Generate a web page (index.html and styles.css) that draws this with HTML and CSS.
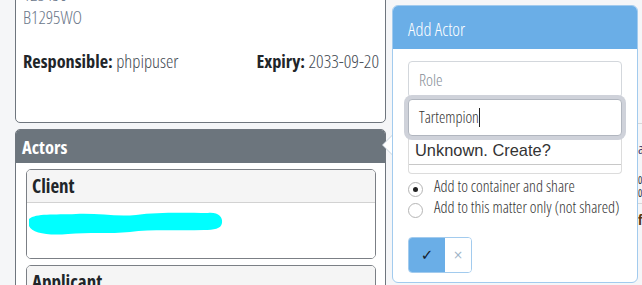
FILE: index.html
```html
<!DOCTYPE html>
<html>
<head>
<meta charset="utf-8">
<link rel="stylesheet" href="styles.css">
</head>
<body>
<div class="page">
  <main class="left">
    <section class="card info">
      <div class="ref-line cut">123456</div>
      <div class="ref-line">B1295WO</div>
      <div class="meta-row">
        <span><b class="lbl">Responsible:</b> <span class="val">phpipuser</span></span>
        <span><b class="lbl">Expiry:</b> <span class="val">2033-09-20</span></span>
      </div>
    </section>
    <section class="card actors">
      <header class="actors-head">Actors</header>
      <div class="actors-body">
        <div class="role-card">
          <div class="role-head">Client</div>
          <div class="role-body">
            <svg class="scribble" width="196" height="26" viewBox="0 0 196 26"><path d="M1,9 C8,3 26,5 48,4 C70,3 88,7 108,5 C130,2 158,3 180,3 C190,2 195,7 194,13 C193,19 186,20 176,20 C150,21 124,19 102,22 C82,24 60,22 40,24 C20,26 4,23 1,16 Z" fill="#00ffff"/></svg>
          </div>
        </div>
        <div class="role-card">
          <div class="role-head">Applicant</div>
          <div class="role-body"></div>
        </div>
      </div>
    </section>
  </main>
  <aside class="right">
    <div class="bg-table">
      <div class="bg-row first">ab</div>
      <div class="bg-row pair">0<br>0</div>
      <div class="bg-row rule strong">f</div>
    </div>
  </aside>
</div>

<div class="popover">
  <span class="arrow"></span>
  <div class="pop-head">Add Actor</div>
  <div class="pop-body">
    <input class="form-control" type="text" placeholder="Role">
    <div class="form-control focused">Tartempion<span class="caret"></span></div>
    <ul class="menu">
      <li class="menu-item">Unknown. Create?</li>
    </ul>
    <div class="radios">
      <label class="radio"><span class="circle checked"></span><span>Add to container and share</span></label>
      <label class="radio"><span class="circle"></span><span>Add to this matter only (not shared)</span></label>
    </div>
    <div class="btn-group">
      <span class="btn ok">✓</span><span class="btn cancel">×</span>
    </div>
  </div>
</div>
</body>
</html>
```
FILE: styles.css
```css
:root {
  --cond: "Open Sans", "DejaVu Sans Condensed", sans-serif;
}
* { box-sizing: border-box; }
html, body { margin: 0; padding: 0; }
body {
  background: #f5f6f8;
  font-family: var(--cond);
  font-stretch: 75%;
  font-weight: 300;
  color: #212529;
  overflow: hidden;
  width: 642px;
  height: 285px;
}
.page {
  display: flex;
  padding-left: 15px;
  margin-top: -22px;
  gap: 6px;
}
.left { width: 371px; flex: none; }
.card {
  background: #fff;
  border: 1px solid #6f767e;
  border-radius: 5px;
}
.info { padding: 5px 6px 50px 7px; }
.ref-line {
  font-size: 18px;
  line-height: 24px;
  color: #6b778a;
}
.ref-line.cut { line-height: 21px; }
.meta-row {
  display: flex;
  justify-content: space-between;
  margin-top: 21px;
  line-height: 22px;
  font-size: 18.6px;
}
.lbl { font-weight: 700; color: #212529; font-size: 18.3px; }
.val { color: #444a52; }
.actors { margin-top: 6px; overflow: hidden; }
.actors-head {
  background: #6c757d;
  color: #fff;
  font-weight: 700;
  font-size: 18.5px;
  height: 33px;
  line-height: 33px;
  padding-left: 6px;
}
.actors-body { padding: 6px 9px 0 10px; }
.role-card {
  border: 1px solid #7b7f85;
  border-radius: 5px;
  overflow: hidden;
  margin-bottom: 6px;
}
.role-head {
  background: #f5f5f5;
  border-bottom: 1px solid #d2d2d2;
  height: 33px;
  line-height: 33px;
  padding-left: 5px;
  font-weight: 700;
  font-size: 19px;
}
.role-body { height: 55px; background: #fff; padding: 7px 0 0 1px; }
.scribble { display: block; }

.right { width: 260px; flex: none; }
.bg-table {
  margin-top: 145px;
  border-top: 1px solid #d8d8d8;
  padding-left: 246px;
  font-size: 15px;
  font-weight: 400;
  color: #333;
}
.bg-row { line-height: 14px; }
.bg-row.first { padding-top: 17px; color: #4a3b6b; margin-bottom: 19px; }
.bg-row.pair { font-size: 10px; line-height: 13px; }
.bg-row.rule { border-top: 1px solid #d8d8d8; margin-top: 3px; padding-top: 8px; }
.bg-row.strong { font-weight: 700; color: #5a3a10; }

.popover {
  position: absolute;
  left: 392px;
  top: 5px;
  width: 246px;
  height: 278px;
  background: #fff;
  border: 1px solid #a2cbee;
  border-radius: 6px;
}
.arrow {
  position: absolute;
  left: -11px;
  top: 129px;
  width: 0; height: 0;
  border-top: 10px solid transparent;
  border-bottom: 10px solid transparent;
  border-right: 10px solid #c9d3dc;
}
.arrow::after {
  content: "";
  position: absolute;
  left: 1px;
  top: -9px;
  border-top: 9px solid transparent;
  border-bottom: 9px solid transparent;
  border-right: 9px solid #fff;
}
.pop-head {
  background: #6aaee7;
  color: #fff;
  height: 43px;
  line-height: 45px;
  padding-left: 15px;
  font-size: 18.3px;
  border-radius: 5px 5px 0 0;
}
.pop-body { padding: 12px 15px 0 15px; }
.form-control {
  display: block;
  width: 214px;
  height: 37px;
  border: 1px solid #d3d7dc;
  border-radius: 4px;
  padding: 0 10px;
  font-family: var(--cond);
  font-stretch: 75%;
  font-weight: 300;
  font-size: 16px;
  line-height: 35px;
  color: #495057;
  background: #fff;
  margin: 0;
}
.form-control::placeholder { color: #868e96; font-size: 16.6px; }
.form-control.focused {
  margin-top: 1px;
  border-color: #b1b6bf;
  box-shadow: 0 0 0 4px #cfd2da;
  position: relative;
  color: #333;
}
.caret {
  display: inline-block;
  width: 1px;
  height: 19px;
  background: #222;
  vertical-align: -4px;
}
.menu {
  list-style: none;
  margin: 0;
  padding: 0 0 8px;
  width: 214px;
  border: 1px solid #dcdcdc;
  border-top: none;
  border-radius: 0 0 4px 4px;
}
.menu-item {
  font-family: "Liberation Sans", Arial, sans-serif;
  font-stretch: normal;
  font-weight: 400;
  font-size: 16.4px;
  color: #333;
  height: 29px;
  line-height: 29px;
  padding-left: 6px;
  border-bottom: 1px solid #c8c8c8;
}
.radios { margin-top: 2px; }
.radio {
  display: flex;
  align-items: flex-start;
  gap: 11px;
  font-size: 16px;
  line-height: 20px;
  color: #333;
}
.circle {
  flex: none;
  width: 15px;
  height: 15px;
  margin-top: 6px;
  border: 1px solid #b5b5b5;
  border-radius: 50%;
  background: #fff;
  display: flex;
  align-items: center;
  justify-content: center;
}
.circle.checked::after {
  content: "";
  width: 5px;
  height: 5px;
  border-radius: 50%;
  background: #222;
}
.btn-group {
  display: flex;
  width: 64px;
  height: 36px;
  margin-top: 19px;
  border: 1px solid #a2cbee;
  border-radius: 4px;
  overflow: hidden;
}
.btn {
  display: flex;
  align-items: center;
  justify-content: center;
  font-family: "DejaVu Sans", sans-serif;
  font-stretch: normal;
  font-weight: 400;
}
.btn.ok {
  width: 36px;
  background: #6aaee7;
  color: #14202e;
  font-size: 15px;
}
.btn.cancel {
  flex: 1;
  background: #fff;
  color: #a0b4c8;
  font-size: 12px;
}
```
